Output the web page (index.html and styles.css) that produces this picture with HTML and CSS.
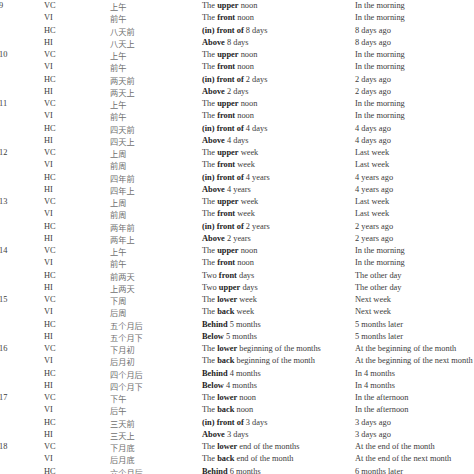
FILE: index.html
```html
<!DOCTYPE html>
<html>
<head>
<meta charset="utf-8">
<link rel="stylesheet" href="styles.css">
</head>
<body>
<div class="table">
  <div class="row"><span class="n">9</span><span class="c">VC</span><span class="z">上午</span><span class="e">The <b>upper</b> noon</span><span class="t">In the morning</span></div>
  <div class="row"><span class="n"></span><span class="c">VI</span><span class="z">前午</span><span class="e">The <b>front</b> noon</span><span class="t">In the morning</span></div>
  <div class="row"><span class="n"></span><span class="c">HC</span><span class="z">八天前</span><span class="e"><b>(in) front of</b> 8 days</span><span class="t">8 days ago</span></div>
  <div class="row"><span class="n"></span><span class="c">HI</span><span class="z">八天上</span><span class="e"><b>Above</b> 8 days</span><span class="t">8 days ago</span></div>

  <div class="row"><span class="n">10</span><span class="c">VC</span><span class="z">上午</span><span class="e">The <b>upper</b> noon</span><span class="t">In the morning</span></div>
  <div class="row"><span class="n"></span><span class="c">VI</span><span class="z">前午</span><span class="e">The <b>front</b> noon</span><span class="t">In the morning</span></div>
  <div class="row"><span class="n"></span><span class="c">HC</span><span class="z">两天前</span><span class="e"><b>(in) front of</b> 2 days</span><span class="t">2 days ago</span></div>
  <div class="row"><span class="n"></span><span class="c">HI</span><span class="z">两天上</span><span class="e"><b>Above</b> 2 days</span><span class="t">2 days ago</span></div>

  <div class="row"><span class="n">11</span><span class="c">VC</span><span class="z">上午</span><span class="e">The <b>upper</b> noon</span><span class="t">In the morning</span></div>
  <div class="row"><span class="n"></span><span class="c">VI</span><span class="z">前午</span><span class="e">The <b>front</b> noon</span><span class="t">In the morning</span></div>
  <div class="row"><span class="n"></span><span class="c">HC</span><span class="z">四天前</span><span class="e"><b>(in) front of</b> 4 days</span><span class="t">4 days ago</span></div>
  <div class="row"><span class="n"></span><span class="c">HI</span><span class="z">四天上</span><span class="e"><b>Above</b> 4 days</span><span class="t">4 days ago</span></div>

  <div class="row"><span class="n">12</span><span class="c">VC</span><span class="z">上周</span><span class="e">The <b>upper</b> week</span><span class="t">Last week</span></div>
  <div class="row"><span class="n"></span><span class="c">VI</span><span class="z">前周</span><span class="e">The <b>front</b> week</span><span class="t">Last week</span></div>
  <div class="row"><span class="n"></span><span class="c">HC</span><span class="z">四年前</span><span class="e"><b>(in) front of</b> 4 years</span><span class="t">4 years ago</span></div>
  <div class="row"><span class="n"></span><span class="c">HI</span><span class="z">四年上</span><span class="e"><b>Above</b> 4 years</span><span class="t">4 years ago</span></div>

  <div class="row"><span class="n">13</span><span class="c">VC</span><span class="z">上周</span><span class="e">The <b>upper</b> week</span><span class="t">Last week</span></div>
  <div class="row"><span class="n"></span><span class="c">VI</span><span class="z">前周</span><span class="e">The <b>front</b> week</span><span class="t">Last week</span></div>
  <div class="row"><span class="n"></span><span class="c">HC</span><span class="z">两年前</span><span class="e"><b>(in) front of</b> 2 years</span><span class="t">2 years ago</span></div>
  <div class="row"><span class="n"></span><span class="c">HI</span><span class="z">两年上</span><span class="e"><b>Above</b> 2 years</span><span class="t">2 years ago</span></div>

  <div class="row"><span class="n">14</span><span class="c">VC</span><span class="z">上午</span><span class="e">The <b>upper</b> noon</span><span class="t">In the morning</span></div>
  <div class="row"><span class="n"></span><span class="c">VI</span><span class="z">前午</span><span class="e">The <b>front</b> noon</span><span class="t">In the morning</span></div>
  <div class="row"><span class="n"></span><span class="c">HC</span><span class="z">前两天</span><span class="e">Two <b>front</b> days</span><span class="t">The other day</span></div>
  <div class="row"><span class="n"></span><span class="c">HI</span><span class="z">上两天</span><span class="e">Two <b>upper</b> days</span><span class="t">The other day</span></div>

  <div class="row"><span class="n">15</span><span class="c">VC</span><span class="z">下周</span><span class="e">The <b>lower</b> week</span><span class="t">Next week</span></div>
  <div class="row"><span class="n"></span><span class="c">VI</span><span class="z">后周</span><span class="e">The <b>back</b> week</span><span class="t">Next week</span></div>
  <div class="row"><span class="n"></span><span class="c">HC</span><span class="z">五个月后</span><span class="e"><b>Behind</b> 5 months</span><span class="t">5 months later</span></div>
  <div class="row"><span class="n"></span><span class="c">HI</span><span class="z">五个月下</span><span class="e"><b>Below</b> 5 months</span><span class="t">5 months later</span></div>

  <div class="row"><span class="n">16</span><span class="c">VC</span><span class="z">下月初</span><span class="e">The <b>lower</b> beginning of the months</span><span class="t">At the beginning of the month</span></div>
  <div class="row"><span class="n"></span><span class="c">VI</span><span class="z">后月初</span><span class="e">The <b>back</b> beginning of the month</span><span class="t">At the beginning of the next month</span></div>
  <div class="row"><span class="n"></span><span class="c">HC</span><span class="z">四个月后</span><span class="e"><b>Behind</b> 4 months</span><span class="t">In 4 months</span></div>
  <div class="row"><span class="n"></span><span class="c">HI</span><span class="z">四个月下</span><span class="e"><b>Below</b> 4 months</span><span class="t">In 4 months</span></div>

  <div class="row"><span class="n">17</span><span class="c">VC</span><span class="z">下午</span><span class="e">The <b>lower</b> noon</span><span class="t">In the afternoon</span></div>
  <div class="row"><span class="n"></span><span class="c">VI</span><span class="z">后午</span><span class="e">The <b>back</b> noon</span><span class="t">In the afternoon</span></div>
  <div class="row"><span class="n"></span><span class="c">HC</span><span class="z">三天前</span><span class="e"><b>(in) front of</b> 3 days</span><span class="t">3 days ago</span></div>
  <div class="row"><span class="n"></span><span class="c">HI</span><span class="z">三天上</span><span class="e"><b>Above</b> 3 days</span><span class="t">3 days ago</span></div>

  <div class="row"><span class="n">18</span><span class="c">VC</span><span class="z">下月底</span><span class="e">The <b>lower</b> end of the months</span><span class="t">At the end of the month</span></div>
  <div class="row"><span class="n"></span><span class="c">VI</span><span class="z">后月底</span><span class="e">The <b>back</b> end of the month</span><span class="t">At the end of the next month</span></div>
  <div class="row"><span class="n"></span><span class="c">HC</span><span class="z">六个月后</span><span class="e"><b>Behind</b> 6 months</span><span class="t">6 months later</span></div>
</div>
</body>
</html>
```

FILE: styles.css
```css
html, body {
  margin: 0;
  padding: 0;
  background: #ffffff;
  overflow: hidden;
}
body {
  width: 474px;
  height: 474px;
  font-family: "Liberation Serif", "Times New Roman", serif;
  font-size: 8.4px;
  color: #3c3c3c;
}
.table {
  display: flex;
  flex-direction: column;
}
.row {
  display: grid;
  grid-template-columns: 44px 66px 92px 153px 1fr;
  height: 12.25px;
  line-height: 12.25px;
  white-space: nowrap;
}
.n {
  margin-left: -1px;
}
.z {
  font-family: "Noto Sans CJK SC", sans-serif;
  font-weight: 400;
  font-size: 8.2px;
  color: #707070;
}
b {
  font-weight: 700;
  color: #1e1e1e;
}
```
